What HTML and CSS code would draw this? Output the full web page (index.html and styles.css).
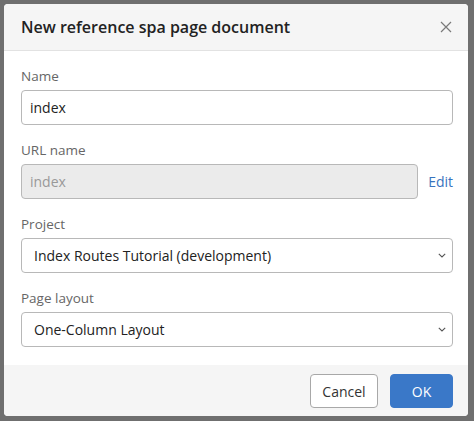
FILE: index.html
```html
<!DOCTYPE html>
<html>
<head>
<meta charset="utf-8">
<link rel="stylesheet" href="styles.css">
</head>
<body>
<div class="dialog">
  <div class="header">
    <div class="title">New reference spa page document</div>
    <svg class="close" width="12" height="12" viewBox="0 0 12 12"><path d="M1 1L11 11M11 1L1 11" stroke="#7a7a7a" stroke-width="1.2" fill="none"/></svg>
  </div>
  <div class="body">
    <div class="field">
      <div class="label">Name</div>
      <div class="input">index</div>
    </div>
    <div class="field">
      <div class="label">URL name</div>
      <div class="row">
        <div class="input disabled">index</div>
        <a class="edit">Edit</a>
      </div>
    </div>
    <div class="field">
      <div class="label">Project</div>
      <div class="input select"><span>Index Routes Tutorial (development)</span>
        <svg class="chev" width="8" height="5" viewBox="0 0 8 5"><path d="M0.8 0.8L4 4L7.2 0.8" stroke="#555" stroke-width="1.1" fill="none"/></svg>
      </div>
    </div>
    <div class="field">
      <div class="label">Page layout</div>
      <div class="input select"><span>One-Column Layout</span>
        <svg class="chev" width="8" height="5" viewBox="0 0 8 5"><path d="M0.8 0.8L4 4L7.2 0.8" stroke="#555" stroke-width="1.1" fill="none"/></svg>
      </div>
    </div>
  </div>
  <div class="footer">
    <button class="btn cancel">Cancel</button>
    <button class="btn ok">OK</button>
  </div>
</div>
</body>
</html>
```
FILE: styles.css
```css
html, body {
  margin: 0;
  padding: 0;
  background: #6f6f6f;
  font-family: "Open Sans", "Noto Sans", sans-serif;
}
body {
  padding: 4px;
  width: 474px;
  height: 421px;
  box-sizing: border-box;
}
.dialog {
  width: 464px;
  height: 412px;
  background: #fff;
  border-radius: 4px;
  overflow: hidden;
  display: flex;
  flex-direction: column;
}
.header {
  height: 46px;
  background: #f5f5f5;
  border-bottom: 1px solid #e2e2e2;
  display: flex;
  align-items: center;
  justify-content: space-between;
  padding: 0 15px 0 17px;
}
.title {
  font-size: 16px;
  font-weight: 600;
  color: #222;
}
.close {
  margin-right: 1px;
}
.body {
  padding: 15px 15px 0 17px;
  flex: 1;
}
.field {
  margin-bottom: 15px;
}
.label {
  font-size: 13.5px;
  line-height: 20px;
  color: #666;
  margin-bottom: 4px;
}
.input {
  height: 35px;
  box-sizing: border-box;
  border: 1px solid #b8b8b8;
  border-radius: 4px;
  padding: 0 8px;
  display: flex;
  align-items: center;
  font-size: 14px;
  color: #222;
}
.row {
  display: flex;
  align-items: center;
}
.row .input {
  flex: 1;
}
.disabled {
  background: #ebebeb;
  color: #999;
}
.edit {
  margin-left: 10px;
  font-size: 14px;
  color: #3873be;
}
.select {
  padding: 0 6px 0 12px;
  justify-content: space-between;
}
.footer {
  height: 51px;
  background: #f5f5f5;
  display: flex;
  justify-content: flex-end;
  align-items: flex-start;
  gap: 12px;
  padding: 9px 15px 0 0;
  box-sizing: border-box;
}
.btn {
  height: 34px;
  border-radius: 4px;
  font-family: "Open Sans", "Noto Sans", sans-serif;
  font-size: 14px;
  padding: 0;
}
.cancel {
  width: 68px;
  background: #fff;
  border: 1px solid #a8a8a8;
  color: #333;
}
.ok {
  width: 63px;
  background: #3a78c8;
  border: 1px solid #3a78c8;
  color: #fff;
}
```
